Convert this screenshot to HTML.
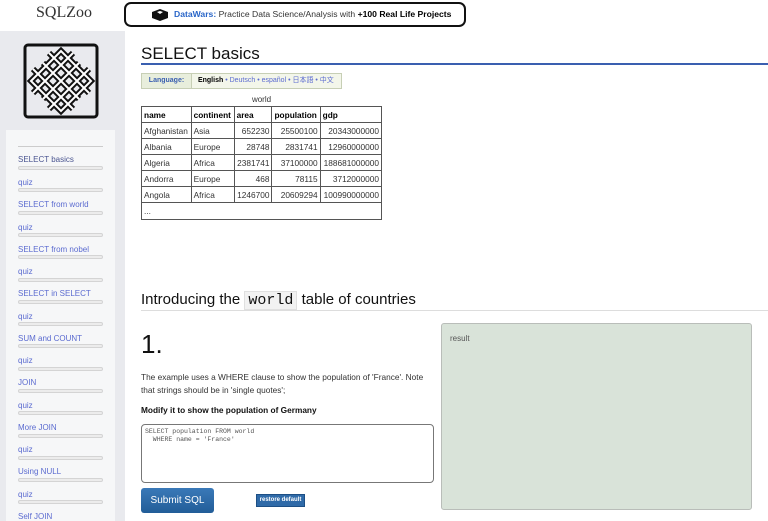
<!DOCTYPE html>
<html><head><meta charset="utf-8"><style>
*{margin:0;padding:0;box-sizing:border-box}
body{width:768px;height:521px;overflow:hidden;background:#fff;font-family:"Liberation Sans","Noto Sans CJK JP",sans-serif;position:relative}
.a{position:absolute}
#side{left:0;top:31px;width:125px;height:490px;background:#e9eaee}
#panel{left:6px;top:130px;width:109px;height:391px;background:#f6f7f8}
.it{position:absolute;left:18px;font-size:8px;color:#5b6bd0}
.bar{position:absolute;left:18px;width:85px;height:4px;border:1px solid #d4d4d4;border-radius:3px;background:#ececec}
table{border-collapse:collapse;font-size:8.3px;color:#333}
td,th{border:1px solid #555;height:16px;padding:0 2px;white-space:nowrap}
th{text-align:left;font-weight:bold;color:#000}
td.r{text-align:right}
</style></head><body>
<div class="a" style="left:36px;top:4px;font-family:'Liberation Serif',serif;font-size:16px;color:#333">SQLZoo</div>
<div class="a" style="left:124px;top:2px;width:342px;height:25px;border:2px solid #111;border-radius:7px;font-size:8.6px;color:#333;line-height:21px;white-space:nowrap;overflow:hidden">
<svg class="a" style="left:25px;top:4px" width="18" height="13" viewBox="0 0 18 13"><path d="M1 4 L9 1 L17 4 L17 10 L9 13 L1 10Z" fill="#111"/><path d="M6 4 L9 3 L12 4 L9 6Z" fill="#fff"/></svg>
<span style="margin-left:48px;color:#2a66c8;font-weight:bold">DataWars:</span> Practice Data Science/Analysis with <b style="color:#000">+100 Real Life Projects</b></div>
<div class="a" id="side"></div>
<svg class="a" style="left:23px;top:43px" width="76" height="76" viewBox="0 0 76 76">
<rect x="2" y="2" width="72" height="72" rx="3" fill="none" stroke="#111" stroke-width="3"/>
<g stroke="#111" stroke-width="6" fill="none"><path d="M8 38 L38 8 L68 38 L38 68Z"/><path d="M20 20 L56 56 M56 20 L20 56 M10 26 L50 66 M26 10 L66 50 M10 50 L50 10 M26 66 L66 26"/></g>
<g stroke="#fff" stroke-width="2" fill="none"><path d="M8 38 L38 8 L68 38 L38 68Z"/><path d="M20 20 L56 56 M56 20 L20 56 M10 26 L50 66 M26 10 L66 50 M10 50 L50 10 M26 66 L66 26"/></g>
</svg>
<div class="a" id="panel"></div>
<div class="a" style="left:18px;top:146px;width:85px;height:1px;background:#ccc"></div>
<div class="it" style="top:155px;color:#4a5590">SELECT basics</div><div class="bar" style="top:166px"></div>
<div class="it" style="top:178px">quiz</div><div class="bar" style="top:188px"></div>
<div class="it" style="top:200px">SELECT from world</div><div class="bar" style="top:211px"></div>
<div class="it" style="top:223px">quiz</div><div class="bar" style="top:233px"></div>
<div class="it" style="top:245px">SELECT from nobel</div><div class="bar" style="top:255px"></div>
<div class="it" style="top:267px">quiz</div><div class="bar" style="top:278px"></div>
<div class="it" style="top:289px">SELECT in SELECT</div><div class="bar" style="top:300px"></div>
<div class="it" style="top:312px">quiz</div><div class="bar" style="top:322px"></div>
<div class="it" style="top:334px">SUM and COUNT</div><div class="bar" style="top:344px"></div>
<div class="it" style="top:356px">quiz</div><div class="bar" style="top:367px"></div>
<div class="it" style="top:378px">JOIN</div><div class="bar" style="top:389px"></div>
<div class="it" style="top:401px">quiz</div><div class="bar" style="top:411px"></div>
<div class="it" style="top:423px">More JOIN</div><div class="bar" style="top:434px"></div>
<div class="it" style="top:445px">quiz</div><div class="bar" style="top:456px"></div>
<div class="it" style="top:467px">Using NULL</div><div class="bar" style="top:478px"></div>
<div class="it" style="top:490px">quiz</div><div class="bar" style="top:500px"></div>
<div class="it" style="top:512px">Self JOIN</div>

<div class="a" style="left:141px;top:44px;font-size:17px;color:#111">SELECT basics</div>
<div class="a" style="left:141px;top:63px;width:627px;height:2px;background:#3a5fb0"></div>
<div class="a" style="left:141px;top:73px;width:201px;height:16px;border:1px solid #c7cfb5;background:#f3f6ea;font-size:7px;line-height:14px;white-space:nowrap">
<span style="display:inline-block;width:50px;text-align:center;color:#3a5fb0;font-weight:bold;border-right:1px solid #c7cfb5;background:#e8eedc">Language:</span>
<b style="margin-left:4px;color:#000">English</b> <span style="color:#5b6bd0">• Deutsch • español • 日本語 • 中文</span></div>
<div class="a" style="left:141px;top:95px;width:241px;text-align:center;font-size:8px;color:#333">world</div>
<table class="a" style="left:141px;top:106px;width:241px">
<tr><th>name</th><th>continent</th><th>area</th><th>population</th><th>gdp</th></tr>
<tr><td>Afghanistan</td><td>Asia</td><td class="r">652230</td><td class="r">25500100</td><td class="r">20343000000</td></tr>
<tr><td>Albania</td><td>Europe</td><td class="r">28748</td><td class="r">2831741</td><td class="r">12960000000</td></tr>
<tr><td>Algeria</td><td>Africa</td><td class="r">2381741</td><td class="r">37100000</td><td class="r">188681000000</td></tr>
<tr><td>Andorra</td><td>Europe</td><td class="r">468</td><td class="r">78115</td><td class="r">3712000000</td></tr>
<tr><td>Angola</td><td>Africa</td><td class="r">1246700</td><td class="r">20609294</td><td class="r">100990000000</td></tr>
<tr><td colspan="5" style="height:17px">...</td></tr>
</table>

<div class="a" style="left:141px;top:291px;font-size:15px;color:#111">Introducing the <span style="font-family:'Liberation Mono',monospace;background:#f2f2f2;border:1px solid #e0e0e0;padding:0 3px">world</span> table of countries</div>
<div class="a" style="left:141px;top:310px;width:627px;height:1px;background:#ddd"></div>
<div class="a" style="left:141px;top:329px;font-size:26px;color:#111">1.</div>
<div class="a" style="left:141px;top:371px;width:295px;font-size:8.3px;line-height:12.5px;color:#333">The example uses a WHERE clause to show the population of 'France'. Note that strings should be in 'single quotes';</div>
<div class="a" style="left:141px;top:405px;font-size:8.3px;font-weight:bold;color:#111">Modify it to show the population of Germany</div>
<div class="a" style="left:141px;top:424px;width:293px;height:59px;border:1.5px solid #777;border-radius:4px;font-family:'Liberation Mono',monospace;font-size:6.5px;color:#555;padding:3px;line-height:8px;white-space:pre">SELECT population FROM world
  WHERE name = 'France'</div>
<div class="a" style="left:141px;top:488px;width:73px;height:25px;background:linear-gradient(#3a79b8,#225d98);border-radius:3px;color:#fff;font-size:10px;text-align:center;line-height:25px">Submit SQL</div>
<div class="a" style="left:256px;top:494px;width:49px;height:13px;background:#2f6aa8;border:1px solid #1d4f85;color:#fff;font-size:6px;text-align:center;line-height:11px;font-weight:bold">restore default</div>
<div class="a" style="left:441px;top:323px;width:311px;height:187px;background:#d9e3d9;border:1px solid #b9bdb9;border-radius:3px;font-size:8px;color:#555;padding:10px 8px">result</div>
</body></html>
